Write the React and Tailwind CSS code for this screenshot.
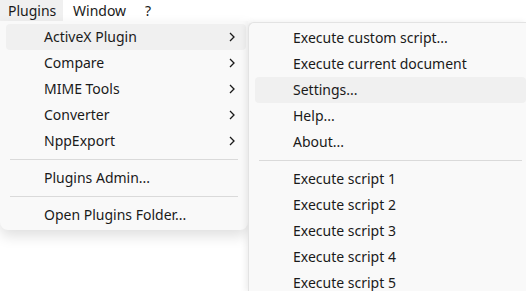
import React from 'react';

const Chevron = () => (
    <svg width="6" height="10" viewBox="0 0 6 10" className="text-[#1a1a1a]">
        <path d="M1 1 L5 5 L1 9" fill="none" stroke="currentColor" strokeWidth="1.3" />
    </svg>
);

const MainItem = ({ label, sub, active }) => (
    <div className={`ml-[6px] mr-[2px] flex h-[26px] items-center justify-between rounded-[4px] pl-[38px] pr-[11px] ${active ? 'bg-[#f0f0f0]' : ''}`}>
        <span>{label}</span>
        {sub && <Chevron />}
    </div>
);

const SubItem = ({ label, active }) => (
    <div className={`ml-[6px] flex h-[26px] items-center rounded-[4px] pl-[38px] ${active ? 'bg-[#f0f0f0]' : ''}`}>
        {label}
    </div>
);

const Separator = ({ className }) => <div className={`my-[5px] h-px bg-[#dadada] ${className}`} />;

const App = () => {
    return (
        <div className="h-[291px] w-[526px] overflow-hidden bg-white text-[14px] leading-none text-[#1a1a1a]" style={{ fontFamily: '"Noto Sans", sans-serif' }}>
            {/* Menu bar */}
            <div className="flex h-[21px] items-center bg-white">
                <div className="flex h-full w-[63px] items-center bg-[#f0f0f0] pl-[8px]">Plugins</div>
                <div className="pl-[10px]">Window</div>
                <div className="pl-[19px]">?</div>
            </div>

            <div className="flex items-start">
                {/* Plugins menu */}
                <div className="relative z-10 w-[248px] rounded-b-[8px] bg-[#f9f9f9] pt-[3px] pb-[2px] shadow-[0_6px_14px_rgba(0,0,0,0.13)]">
                    <MainItem label="ActiveX Plugin" sub active />
                    <MainItem label="Compare" sub />
                    <MainItem label="MIME Tools" sub />
                    <MainItem label="Converter" sub />
                    <MainItem label="NppExport" sub />
                    <Separator className="mx-[10px]" />
                    <MainItem label="Plugins Admin..." />
                    <Separator className="mx-[10px]" />
                    <MainItem label="Open Plugins Folder..." />
                </div>

                {/* ActiveX submenu */}
                <div className="relative z-20 mt-px h-[270px] flex-1 rounded-tl-[6px] border-l border-t border-[#e3e3e3] bg-[#f9f9f9] pt-[2px] shadow-[-2px_0_6px_rgba(0,0,0,0.08)]">
                    <SubItem label="Execute custom script..." />
                    <SubItem label="Execute current document" />
                    <SubItem label="Settings..." active />
                    <SubItem label="Help..." />
                    <SubItem label="About..." />
                    <Separator className="ml-[10px] mr-[4px]" />
                    <SubItem label="Execute script 1" />
                    <SubItem label="Execute script 2" />
                    <SubItem label="Execute script 3" />
                    <SubItem label="Execute script 4" />
                    <SubItem label="Execute script 5" />
                </div>
            </div>
        </div>
    );
};

export default App;
